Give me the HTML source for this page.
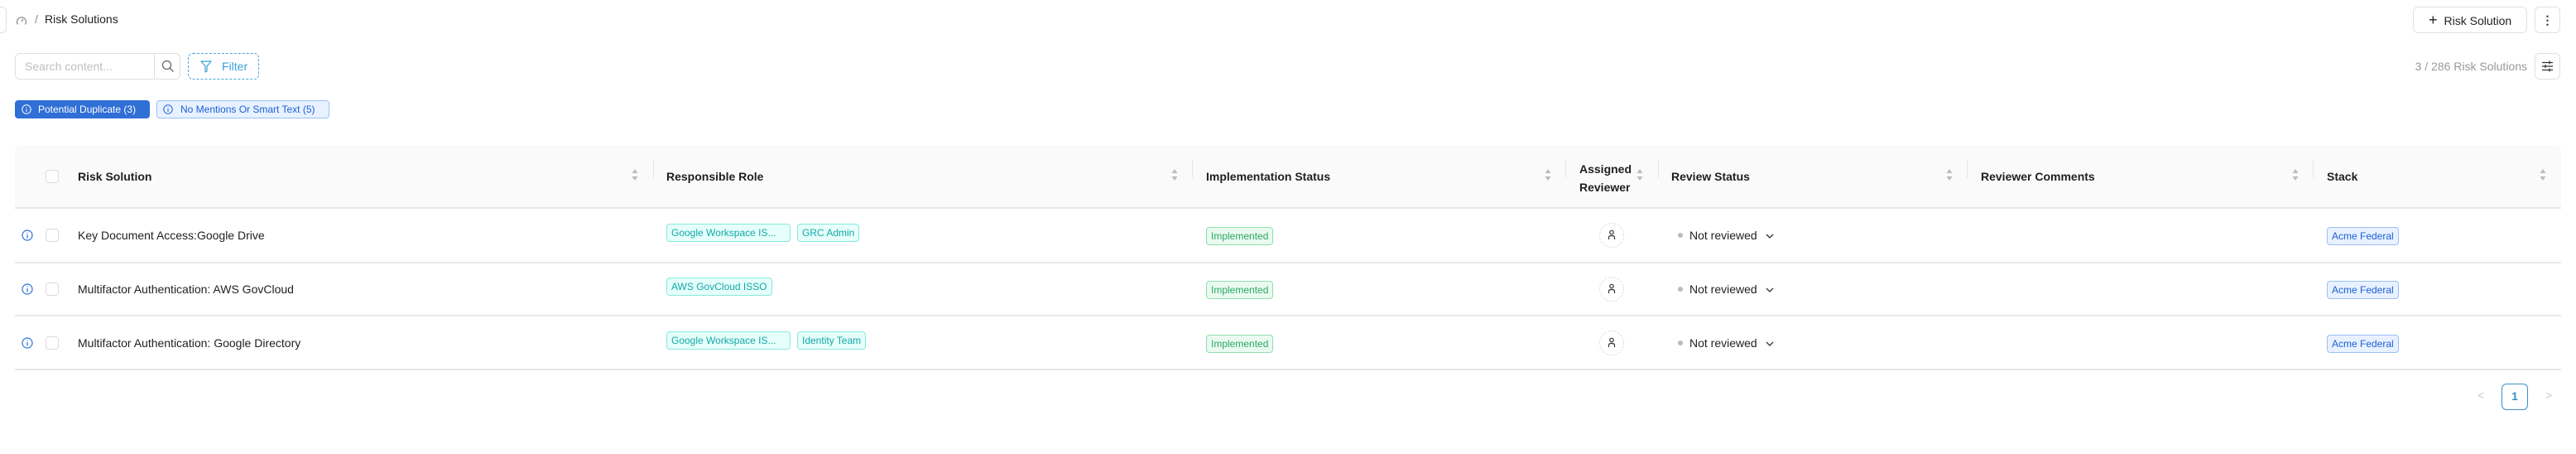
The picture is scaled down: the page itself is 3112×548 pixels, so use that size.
<!DOCTYPE html>
<html><head><meta charset="utf-8"><style>
*{box-sizing:border-box;margin:0;padding:0}
body{width:3112px;height:548px;background:#fff;font-family:"Liberation Sans",sans-serif;color:#1f1f1f;position:relative;overflow:hidden;font-size:14px}
.a{position:absolute}
.tag{position:absolute;height:22px;line-height:20px;font-size:12px;padding:0 5px;border-radius:4px;border:1px solid;white-space:nowrap}
.teal{background:#e6fffb;border-color:#87e8de;color:#13a8a8}
.green{background:#eafaf0;border-color:#8ee0ab;color:#2aa863}
.blue{background:#e8f1ff;border-color:#9cc0f5;color:#1d5fd6}
.hd{position:absolute;font-weight:bold;font-size:14px;color:#1f1f1f}
.div{position:absolute;top:193px;width:1px;height:22px;background:#e6e6e6}
.sort{position:absolute;top:204px;width:8px;height:16px}
.cb{position:absolute;width:16px;height:16px;border:1px solid #d9d9d9;border-radius:4px;background:#fff}
.line{position:absolute;left:18px;width:3076px;height:2px;background:#e8e8e8}
.rt{position:absolute;font-size:14px;left:94px}
</style></head><body>
<div class="a" style="left:-8px;top:8px;width:16px;height:32px;border:1px solid #e0e0e0;border-radius:6px"></div>
<svg class="a" style="left:19px;top:18px" width="14" height="14" viewBox="0 0 14 14"><path d="M2.5 11.5A5.5 5.5 0 1 1 11.5 11.5" fill="none" stroke="#888" stroke-width="1.2"/><path d="M7 8L9 5" stroke="#888" stroke-width="1.2"/></svg>
<div class="a" style="left:42px;top:15px;color:#888">/</div>
<div class="a" style="left:54px;top:15px;color:#1f1f1f">Risk Solutions</div>

<div class="a" style="left:2915px;top:8px;width:138px;height:32px;border:1px solid #e0e0e0;border-radius:6px;font-size:14px;line-height:30px;padding-left:18px"><span style="font-size:18px;margin-right:8px">+</span>Risk Solution</div>
<div class="a" style="left:3062px;top:8px;width:31px;height:32px;border:1px solid #e0e0e0;border-radius:6px;text-align:center;line-height:30px;font-weight:bold">⋮</div>

<div class="a" style="left:18px;top:64px;width:200px;height:32px;border:1px solid #e0e0e0;border-radius:6px"></div>
<div class="a" style="left:186px;top:65px;width:1px;height:30px;background:#e0e0e0"></div>
<div class="a" style="left:30px;top:72px;color:#bfbfbf">Search content...</div>
<svg class="a" style="left:195px;top:72px" width="16" height="16" viewBox="0 0 16 16"><circle cx="6.5" cy="6.5" r="5" fill="none" stroke="#666" stroke-width="1.3"/><path d="M10 10L14.5 14.5" stroke="#666" stroke-width="1.3"/></svg>
<div class="a" style="left:227px;top:64px;width:86px;height:32px;border:1px dashed #4aa6e0;border-radius:6px;color:#3ba0db;line-height:30px;padding-left:40px">Filter</div>
<svg class="a" style="left:242px;top:73px" width="14" height="15" viewBox="0 0 14 15"><path d="M1 1H13L8 7V13L6 14V7Z" fill="none" stroke="#3ba0db" stroke-width="1.2" stroke-linejoin="round"/></svg>

<div class="a" style="left:2914px;top:72px;color:#999;width:139px;text-align:right">3 / 286 Risk Solutions</div>
<div class="a" style="left:3062px;top:64px;width:31px;height:32px;border:1px solid #e0e0e0;border-radius:6px"></div>
<svg class="a" style="left:3070px;top:73px" width="15" height="14" viewBox="0 0 15 14"><path d="M1 2.5H14M1 7H14M1 11.5H14" stroke="#333" stroke-width="1.2"/><path d="M10 0.5V4.5M5 5V9M10 9.5V13.5" stroke="#333" stroke-width="1.2"/></svg>

<div class="a" style="left:18px;top:121px;width:163px;height:22px;border-radius:4px;background:#2f6fd6;color:#fff;font-size:12px;line-height:22px;padding-left:28px">Potential Duplicate (3)</div>
<svg class="a" style="left:26px;top:126px" width="12" height="12" viewBox="0 0 12 12"><circle cx="6" cy="6" r="5.2" fill="none" stroke="#fff"/><path d="M6 5V9M6 3V3.8" stroke="#fff"/></svg>
<div class="a" style="left:189px;top:121px;width:209px;height:22px;border-radius:4px;background:#e8f1ff;border:1px solid #9cc0f5;color:#1d5fd6;font-size:12px;line-height:20px;padding-left:28px">No Mentions Or Smart Text (5)</div>
<svg class="a" style="left:197px;top:126px" width="12" height="12" viewBox="0 0 12 12"><circle cx="6" cy="6" r="5.2" fill="none" stroke="#1d5fd6"/><path d="M6 5V9M6 3V3.8" stroke="#1d5fd6"/></svg>

<div class="a" style="left:18px;top:175px;width:3076px;height:76px;background:#fafafa;border-radius:8px 8px 0 0"></div>
<div class="line" style="top:250px"></div>
<div class="line" style="top:316px"></div>
<div class="line" style="top:380px"></div>
<div class="line" style="top:445px"></div>
<div class="cb" style="left:55px;top:205px"></div>
<div class="hd" style="left:94px;top:205px">Risk Solution</div>
<div class="hd" style="left:805px;top:205px">Responsible Role</div>
<div class="hd" style="left:1457px;top:205px">Implementation Status</div>
<div class="hd" style="left:1908px;top:193px;line-height:22px">Assigned<br>Reviewer</div>
<div class="hd" style="left:2019px;top:205px">Review Status</div>
<div class="hd" style="left:2393px;top:205px">Reviewer Comments</div>
<div class="hd" style="left:2811px;top:205px">Stack</div>
<div class="div" style="left:789px"></div><div class="div" style="left:1440px"></div><div class="div" style="left:1891px"></div><div class="div" style="left:2003px"></div><div class="div" style="left:2376px"></div><div class="div" style="left:2794px"></div>
<svg width="0" height="0" style="position:absolute"><defs><g id="s"><path d="M4 0L7.5 5H0.5Z" fill="#bbb"/><path d="M4 14L7.5 9H0.5Z" fill="#bbb"/></g>
<g id="i"><circle cx="7" cy="7" r="6" fill="none" stroke="#2f6fd6" stroke-width="1.2"/><path d="M7 6V10.5M7 3.5V4.5" stroke="#2f6fd6" stroke-width="1.2"/></g>
<g id="p"><circle cx="15" cy="15" r="14.5" fill="#fff" stroke="#d8d8d8" stroke-dasharray="2 2"/><circle cx="15" cy="11.5" r="2.2" fill="none" stroke="#333" stroke-width="1.2"/><path d="M11.5 20V17.5Q11.5 15.5 15 15.5Q18.5 15.5 18.5 17.5V20" fill="none" stroke="#333" stroke-width="1.2"/></g>
<g id="c"><path d="M1 1L5 5L9 1" fill="none" stroke="#333" stroke-width="1.3"/></g>
</defs></svg>
<svg class="sort" style="left:763px" viewBox="0 0 8 16"><use href="#s"/></svg>
<svg class="sort" style="left:1415px" viewBox="0 0 8 16"><use href="#s"/></svg>
<svg class="sort" style="left:1866px" viewBox="0 0 8 16"><use href="#s"/></svg>
<svg class="sort" style="left:1977px" viewBox="0 0 8 16"><use href="#s"/></svg>
<svg class="sort" style="left:2351px" viewBox="0 0 8 16"><use href="#s"/></svg>
<svg class="sort" style="left:2769px" viewBox="0 0 8 16"><use href="#s"/></svg>
<svg class="sort" style="left:3068px" viewBox="0 0 8 16"><use href="#s"/></svg>

<svg class="a" style="left:26px;top:277px" width="14" height="14"><use href="#i"/></svg>
<div class="cb" style="left:55px;top:276px"></div>
<div class="rt" style="top:276px">Key Document Access:Google Drive</div>
<div class="tag teal" style="left:805px;top:270px;width:150px">Google Workspace IS...</div>
<div class="tag teal" style="left:963px;top:270px">GRC Admin</div>
<div class="tag green" style="left:1457px;top:274px">Implemented</div>
<svg class="a" style="left:1932px;top:269px" width="30" height="30"><use href="#p"/></svg>
<div class="a" style="left:2027px;top:281px;width:6px;height:6px;border-radius:3px;background:#bbb"></div>
<div class="a" style="left:2041px;top:276px">Not reviewed</div>
<svg class="a" style="left:2133px;top:282px" width="10" height="7"><use href="#c"/></svg>
<div class="tag blue" style="left:2811px;top:274px">Acme Federal</div>

<svg class="a" style="left:26px;top:342px" width="14" height="14"><use href="#i"/></svg>
<div class="cb" style="left:55px;top:341px"></div>
<div class="rt" style="top:341px">Multifactor Authentication: AWS GovCloud</div>
<div class="tag teal" style="left:805px;top:335px">AWS GovCloud ISSO</div>
<div class="tag green" style="left:1457px;top:339px">Implemented</div>
<svg class="a" style="left:1932px;top:334px" width="30" height="30"><use href="#p"/></svg>
<div class="a" style="left:2027px;top:346px;width:6px;height:6px;border-radius:3px;background:#bbb"></div>
<div class="a" style="left:2041px;top:341px">Not reviewed</div>
<svg class="a" style="left:2133px;top:347px" width="10" height="7"><use href="#c"/></svg>
<div class="tag blue" style="left:2811px;top:339px">Acme Federal</div>

<svg class="a" style="left:26px;top:407px" width="14" height="14"><use href="#i"/></svg>
<div class="cb" style="left:55px;top:406px"></div>
<div class="rt" style="top:406px">Multifactor Authentication: Google Directory</div>
<div class="tag teal" style="left:805px;top:400px;width:150px">Google Workspace IS...</div>
<div class="tag teal" style="left:963px;top:400px">Identity Team</div>
<div class="tag green" style="left:1457px;top:404px">Implemented</div>
<svg class="a" style="left:1932px;top:399px" width="30" height="30"><use href="#p"/></svg>
<div class="a" style="left:2027px;top:411px;width:6px;height:6px;border-radius:3px;background:#bbb"></div>
<div class="a" style="left:2041px;top:406px">Not reviewed</div>
<svg class="a" style="left:2133px;top:412px" width="10" height="7"><use href="#c"/></svg>
<div class="tag blue" style="left:2811px;top:404px">Acme Federal</div>

<div class="a" style="left:2993px;top:469px;color:#c8c8c8;font-size:14px">&lt;</div>
<div class="a" style="left:3022px;top:463px;width:32px;height:32px;border:1.5px solid #3d8fc6;border-radius:6px;text-align:center;line-height:29px;color:#3d8fc6;font-weight:bold">1</div>
<div class="a" style="left:3075px;top:469px;color:#c8c8c8;font-size:14px">&gt;</div>
</body></html>
